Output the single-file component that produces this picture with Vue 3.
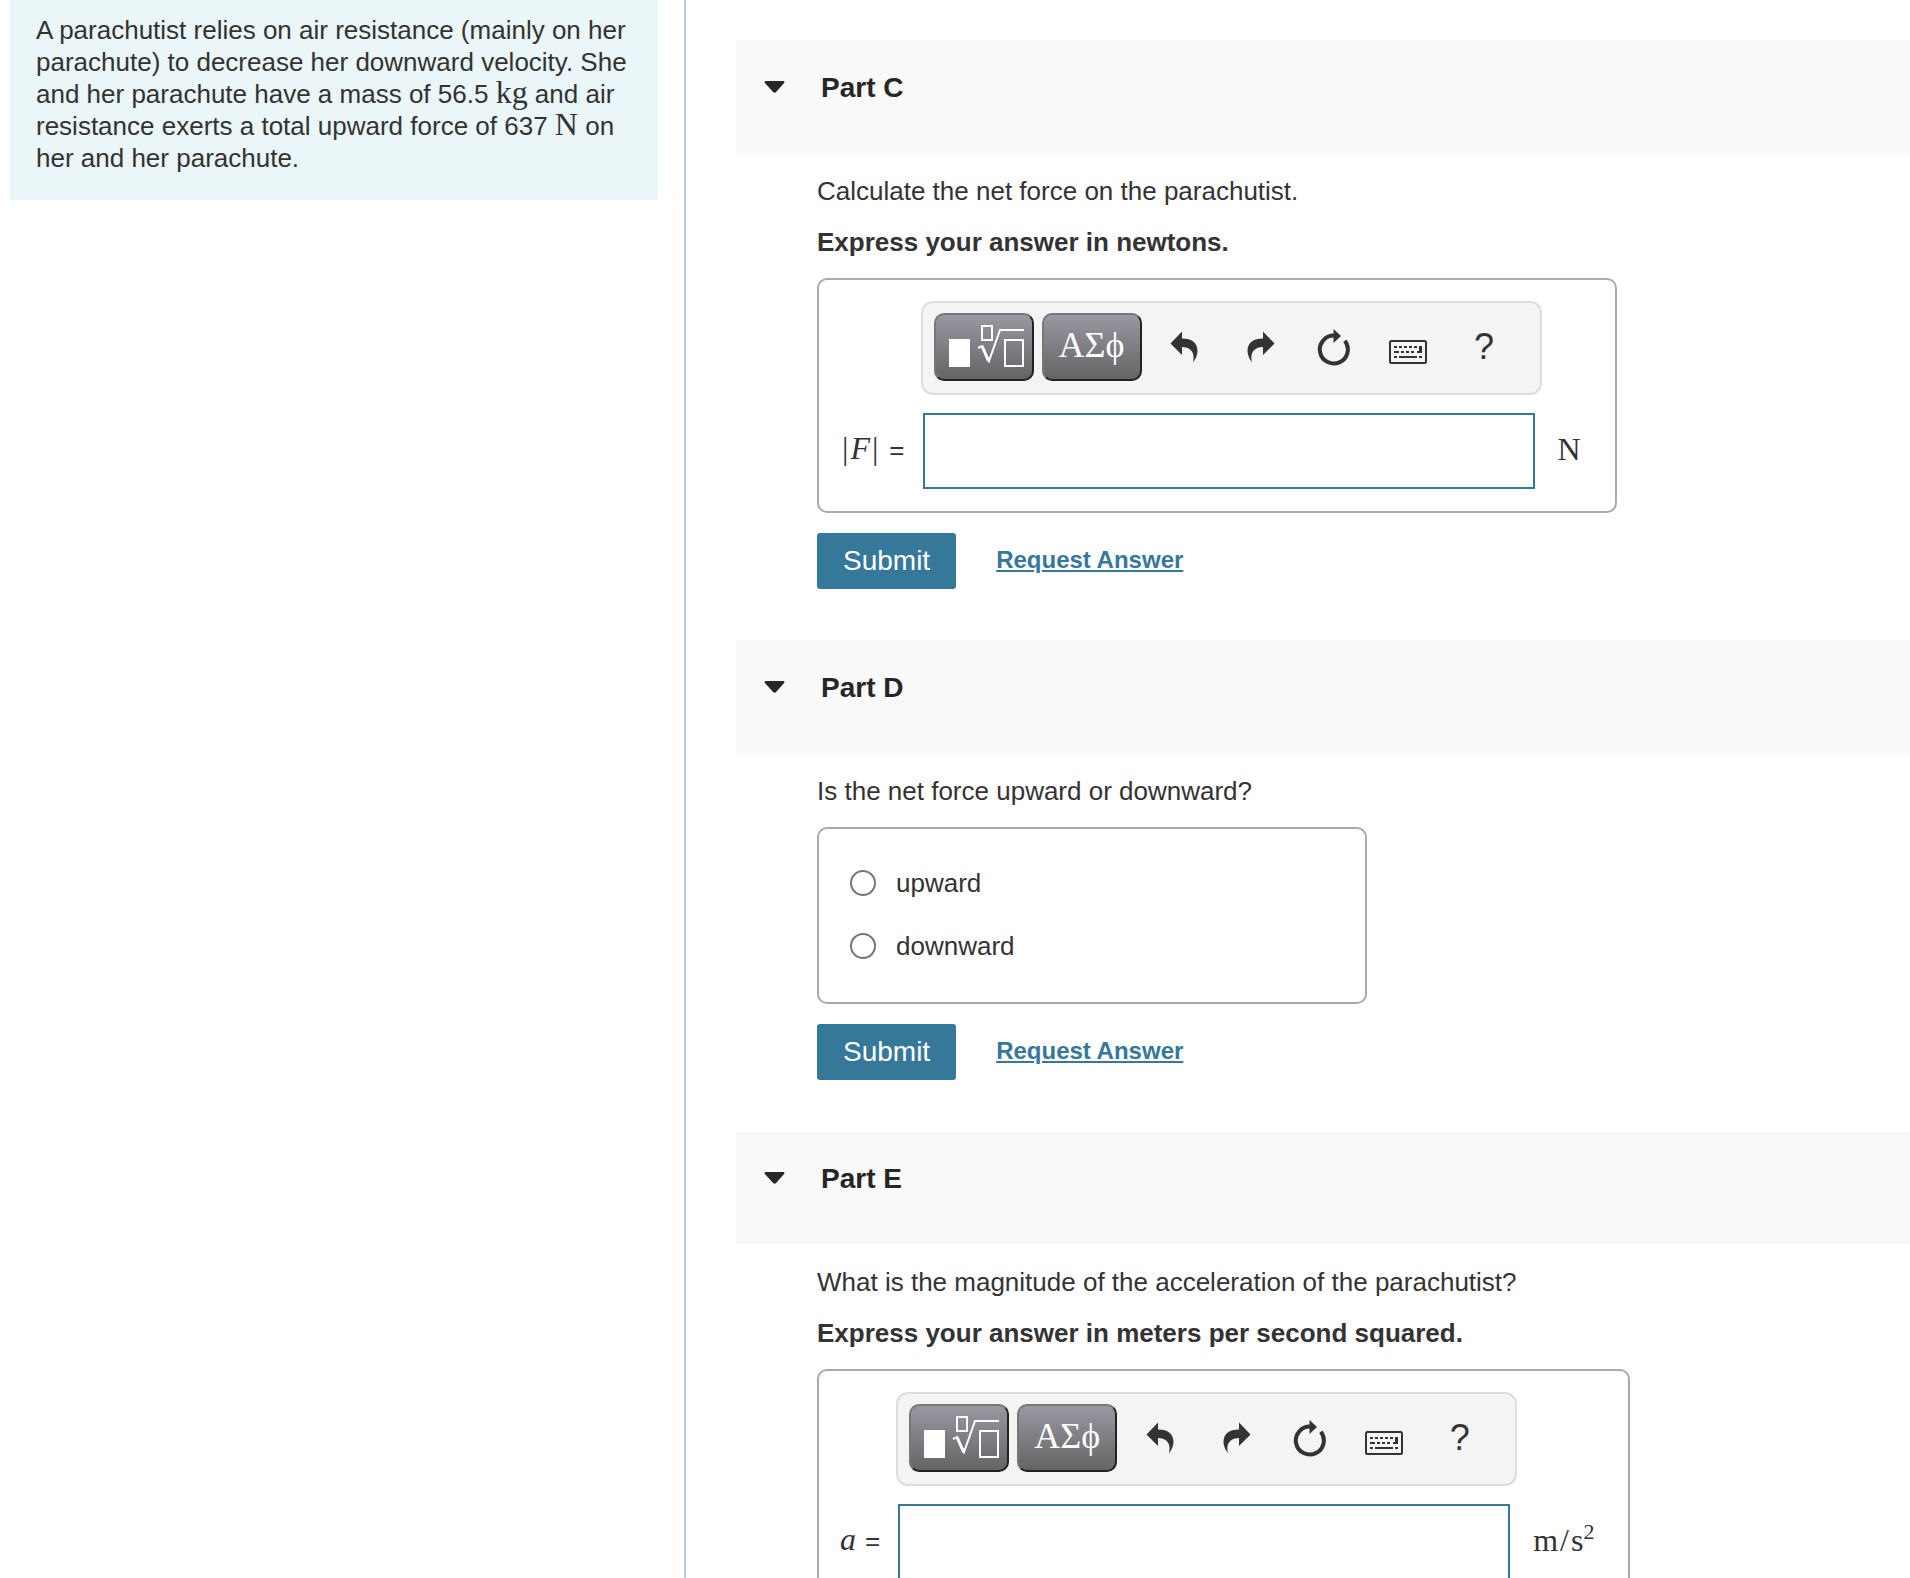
<script setup>
import { ref } from 'vue'

// Each part is either a numeric answer (symbol + unit) or a list of choices.
const parts = [
  {
    id: 'c',
    title: 'Part C',
    question: 'Calculate the net force on the parachutist.',
    hint: 'Express your answer in newtons.',
    symbol: 'F',
    abs: true,
    unit: 'N',
  },
  {
    id: 'd',
    title: 'Part D',
    question: 'Is the net force upward or downward?',
    choices: ['upward', 'downward'],
  },
  {
    id: 'e',
    title: 'Part E',
    question: 'What is the magnitude of the acceleration of the parachutist?',
    hint: 'Express your answer in meters per second squared.',
    symbol: 'a',
    unit: 'm/s2',
  },
]

const answers = ref({ c: '', d: '', e: '' })
</script>

<template>
  <div class="page">
    <aside class="intro">
      <p class="intro__text">
        A parachutist relies on air resistance (mainly on her parachute) to decrease her downward
        velocity. She and her parachute have a mass of 56.5 <span class="math">kg</span> and air
        resistance exerts a total upward force of 637 <span class="math">N</span> on her and her
        parachute.
      </p>
    </aside>

    <main class="parts">
      <section v-for="part in parts" :key="part.id" class="part">
        <header class="part__header">
          <button class="part__toggle" type="button" :aria-label="'Collapse ' + part.title">
            <svg width="22" height="12" viewBox="0 0 22 12">
              <path d="M1.5 0h18q1.500 .8 .6 2l-8 9q-1.500 1.300-3 0L.9 2Q0 .8 1.500 0z" fill="#262626" />
            </svg>
          </button>
          <h2 class="part__title">{{ part.title }}</h2>
        </header>

        <div class="part__body">
          <p class="part__question">{{ part.question }}</p>
          <p v-if="part.hint" class="part__hint">{{ part.hint }}</p>

          <fieldset v-if="part.choices" class="choices" :aria-label="part.question">
            <label v-for="choice in part.choices" :key="choice" class="choice">
              <input v-model="answers[part.id]" type="radio" :name="part.id" :value="choice" />
              {{ choice }}
            </label>
          </fieldset>

          <div v-else class="answer">
            <div class="toolbar">
              <button class="tool tool--dark" type="button" aria-label="Templates">
                <svg width="100" height="68" viewBox="0 0 100 68" fill="none" stroke="#fff" stroke-width="2">
                  <rect x="15" y="26" width="21" height="28" fill="#fff" stroke="none" />
                  <rect x="48" y="13" width="10" height="14" />
                  <path d="M44 35l4-2 7 15 11-31h24" />
                  <path d="M48 33l6.500 15" stroke-width="3" />
                  <rect x="71" y="27" width="18" height="26" />
                </svg>
              </button>
              <button class="tool tool--dark" type="button" aria-label="Symbols">ΑΣϕ</button>
              <button class="tool tool--first" type="button" aria-label="Undo">
                <svg width="40" height="40" viewBox="0 0 40 40" fill="#333">
                  <path d="M6.500 16.500L18 4.500V11.500C28 11.500 33.500 16 33.500 24C33.500 28 31.500 32 29 35.500C30.500 29 30 20.500 18 20V28z" />
                </svg>
              </button>
              <button class="tool" type="button" aria-label="Redo">
                <svg width="40" height="40" viewBox="0 0 40 40" fill="#333">
                  <path d="M35.500 16.500L24 4.500V11.500C14 11.500 8.500 16 8.500 24C8.500 28 10.500 32 13 35.500C11.500 29 12 20.500 24 20V28z" />
                </svg>
              </button>
              <button class="tool" type="button" aria-label="Reset">
                <svg width="40" height="40" viewBox="0 0 40 40">
                  <path d="M30.800 13.800A14 14 0 1 1 20 8.500" fill="none" stroke="#333" stroke-width="4" />
                  <path d="M19.500 2L27 9L19.500 16z" fill="#333" />
                </svg>
              </button>
              <button class="tool" type="button" aria-label="Keyboard shortcuts">
                <svg width="40" height="40" viewBox="0 0 40 40" fill="#333">
                  <rect x="1" y="14" width="36" height="22" rx="1.500" fill="none" stroke="#333" stroke-width="2" />
                  <path d="M5 19h3v2H5zM10 19h3v2h-3zM15 19h3v2h-3zM20 19h3v2h-3zM25 19h3v2h-3z" />
                  <path d="M5 24h5v2H5zM12 24h3v2h-3zM17 24h3v2h-3zM22 24h3v2h-3zM30 19h3v7h-5v-2h2z" />
                  <path d="M5 29h3v2H5zM10 29h18v2H10zM30 29h3v2h-3z" />
                </svg>
              </button>
              <button class="tool tool--help" type="button" aria-label="Help">?</button>
            </div>

            <label class="answer__label" :for="'answer-' + part.id">
              <span class="symbol"
                ><span v-if="part.abs" class="bar">|</span><i>{{ part.symbol }}</i
                ><span v-if="part.abs" class="bar">|</span></span
              >
              <span>=</span>
            </label>
            <input :id="'answer-' + part.id" v-model="answers[part.id]" class="answer__input" type="text" />
            <span v-if="part.unit === 'm/s2'" class="answer__unit">m<span class="slash">/</span>s<sup>2</sup></span>
            <span v-else class="answer__unit">{{ part.unit }}</span>
          </div>

          <div class="actions">
            <button class="submit" type="button">Submit</button>
            <a class="request" href="#">Request Answer</a>
          </div>
        </div>
      </section>
    </main>
  </div>
</template>

<style>
body {
  margin: 0;
  background: #fff;
}
</style>

<style scoped>
.page {
  display: grid;
  grid-template-columns: 684px 1fr;
  height: 100vh;
  overflow: hidden;
  color: #333;
  font-family: "Liberation Sans", Arial, sans-serif;
  font-size: 26px;
  line-height: 32px;
}
.page * {
  box-sizing: border-box;
}
p,
h2 {
  margin: 0;
}
button {
  font-family: inherit;
  color: inherit;
  cursor: pointer;
}

.intro {
  padding: 0 26px 0 10px;
}
.intro__text {
  padding: 14px 26px 26px;
  background: #eaf6f8;
}
.math {
  font-family: "Liberation Serif", "Times New Roman", serif;
  font-size: 32px;
  line-height: 28px;
}

.parts {
  padding: 41px 0 0 50px;
  border-left: 2px solid #bcc9df;
}
.part {
  padding-bottom: 52px;
}
.part__header {
  display: flex;
  align-items: flex-start;
  gap: 35px;
  height: 112px;
  padding: 31px 28px;
  background: #f9f9f9;
}
.part__toggle {
  display: flex;
  align-items: center;
  height: 30px;
  padding: 0;
  border: 0;
  background: none;
}
.part__title {
  color: #262626;
  font-size: 28px;
  line-height: 32px;
}
.part__body {
  padding: 22px 32px 0 81px;
}
.part__hint {
  margin-top: 19px;
  font-weight: bold;
}

.choices,
.answer {
  width: fit-content;
  margin: 20px 0 0;
  border: 2px solid #aaa;
  border-radius: 10px;
}
.choices {
  display: flex;
  flex-direction: column;
  gap: 31px;
  min-width: 550px;
  padding: 38px 31px 40px;
}
.choice {
  display: flex;
  align-items: center;
  gap: 20px;
}
.choice input {
  width: 26px;
  height: 26px;
  margin: 0;
  appearance: none;
  border: 2px solid #767676;
  border-radius: 50%;
  background: #fff;
}
.choice input:checked {
  background: radial-gradient(#36789a 50%, #fff 55%);
}

.answer {
  display: grid;
  grid-template-columns: auto 621px auto;
  column-gap: 16px;
  row-gap: 18px;
  align-items: center;
  padding: 21px 34px 22px 21px;
}
.toolbar {
  display: flex;
  grid-row: 1;
  grid-column: 2;
  padding: 10px 18px 12px 11px;
  border: 2px solid #ddd;
  border-radius: 12px;
  background: #f4f4f4;
}
.tool {
  display: flex;
  align-items: center;
  justify-content: center;
  width: 75px;
  height: 68px;
  padding: 0;
  border: 0;
  background: none;
}
.tool--dark {
  width: 100px;
  padding-bottom: 4px;
  border: 2px solid;
  border-color: #777 #222 #222 #777;
  border-radius: 10px;
  background: linear-gradient(#9a98a2, #646464);
  color: #fff;
  font-family: "Liberation Serif", "Times New Roman", serif;
  font-size: 36px;
}
.tool--dark:first-child {
  padding-bottom: 0;
}
.tool--dark + .tool--dark {
  margin-left: 8px;
}
.tool--dark svg {
  flex: none;
}
.tool--first {
  margin-left: 5px;
}
.tool--help {
  font-size: 36px;
}

.answer__label {
  display: flex;
  grid-row: 2;
  grid-column: 1;
  align-items: baseline;
  gap: 9px;
  padding-bottom: 4px;
}
.symbol,
.answer__unit {
  font-family: "Liberation Serif", "Times New Roman", serif;
  font-size: 32px;
}
.bar,
.slash {
  padding: 0 2px;
}
.answer__unit {
  grid-row: 2;
  grid-column: 3;
  padding-bottom: 4px;
  white-space: nowrap;
}
.answer__unit sup {
  font-size: 22px;
  line-height: 16px;
}
.answer__input {
  grid-row: 2;
  grid-column: 2;
  width: 612px;
  height: 76px;
  margin-left: 2px;
  padding: 0 16px;
  border: 2px solid #36789a;
  outline: 0;
  color: inherit;
  font: inherit;
}

.actions {
  display: flex;
  align-items: center;
  gap: 40px;
  margin-top: 20px;
}
.submit {
  height: 56px;
  padding: 0 26px;
  border: 0;
  border-radius: 3px;
  background: #36789a;
  color: #fff;
  font-size: 28px;
}
.request {
  padding-bottom: 3px;
  color: #36789a;
  font-size: 24px;
  font-weight: bold;
}
</style>
